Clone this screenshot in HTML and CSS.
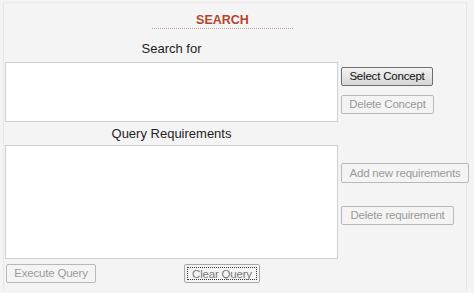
FILE: index.html
```html
<!DOCTYPE html>
<html>
<head>
<meta charset="utf-8">
<link rel="stylesheet" href="styles.css">
</head>
<body>
<div class="panel">
  <div class="main">
    <div class="left">
      <div class="title-row"><h1 class="title">SEARCH</h1></div>
      <div class="label label-search">Search for</div>
      <div class="box box-search"></div>
      <div class="label label-query">Query Requirements</div>
      <div class="box box-query"></div>
    </div>
    <div class="right">
      <button class="btn btn-select">Select Concept</button>
      <button class="btn btn-disabled btn-delconcept">Delete Concept</button>
      <button class="btn btn-disabled btn-add">Add new requirements</button>
      <button class="btn btn-disabled btn-delreq">Delete requirement</button>
    </div>
  </div>
  <div class="footer">
    <button class="btn btn-disabled btn-exec">Execute Query</button>
    <button class="btn btn-disabled btn-clear"><span class="focus">Clear Query</span></button>
  </div>
</div>
</body>
</html>
```
FILE: styles.css
```css
html, body {
  margin: 0;
  padding: 0;
  background: #f4f4f4;
}
body {
  width: 474px;
  height: 293px;
  overflow: hidden;
  font-family: "Liberation Sans", Arial, sans-serif;
  color: #1e1e1e;
}
.panel {
  margin: 2px 0 0 3px;
  width: 464px;
  height: 288px;
  box-sizing: border-box;
  border-left: 1px solid #e7e7e7;
  border-top: 1px solid #ececec;
  border-right: 1px solid #e7e7e7;
  padding-left: 1px;
}
.main {
  display: flex;
  align-items: flex-start;
  gap: 3px;
}
.left {
  width: 333px;
  display: flex;
  flex-direction: column;
}
.title-row {
  padding-left: 147px;
  padding-top: 9px;
}
.title {
  margin: 0;
  width: 141px;
  height: 16px;
  font-size: 12.5px;
  line-height: 16px;
  font-weight: bold;
  color: #b4442c;
  text-align: center;
  border-bottom: 1px dotted #c49a9a;
}
.label {
  font-size: 13px;
  line-height: 16px;
  text-align: center;
  color: #1e1e1e;
}
.label-search {
  padding: 12px 0 5px 0;
}
.label-query {
  padding: 4px 0 3px 0;
}
.box {
  background: #ffffff;
  border: 1px solid #cfcfcf;
  box-sizing: border-box;
  width: 333px;
}
.box-search {
  height: 60px;
}
.box-query {
  height: 114px;
}
.right {
  display: flex;
  flex-direction: column;
  align-items: flex-start;
  padding-top: 64px;
}
.btn {
  font-family: "Liberation Sans", Arial, sans-serif;
  font-size: 11.5px;
  height: 19px;
  line-height: 15px;
  padding: 0;
  margin: 0;
  box-sizing: border-box;
  border-radius: 2px;
  text-align: center;
  white-space: nowrap;
  letter-spacing: -0.2px;
}
.btn-select {
  width: 92px;
  color: #111;
  border: 1px solid #6f6f6f;
  background: linear-gradient(#f3f3f3, #e4e4e4 50%, #d6d6d6);
}
.btn-disabled {
  color: #9a9a9a;
  border: 1px solid #b9b9b9;
  background: #f4f4f4;
}
.btn-delconcept {
  width: 93px;
  margin-top: 9px;
}
.btn-add {
  width: 128px;
  height: 20px;
  margin-top: 49px;
}
.btn-delreq {
  width: 113px;
  margin-top: 23px;
}
.footer {
  display: flex;
  padding-top: 5px;
  padding-left: 1px;
}
.btn-exec {
  width: 90px;
}
.btn-clear {
  width: 76px;
  margin-left: 88px;
  color: #7a7a7a;
  border-color: #a8a8a8;
  padding: 2px;
}
.focus {
  display: block;
  height: 13px;
  line-height: 12px;
  border: 1px dotted #333;
  box-sizing: border-box;
}
```
